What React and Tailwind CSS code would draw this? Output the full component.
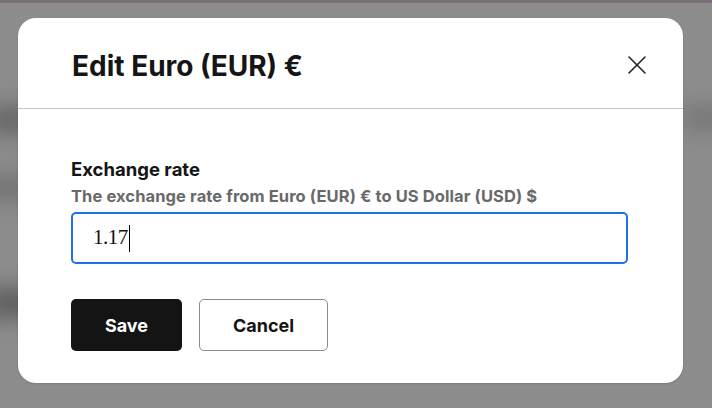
import { X } from 'lucide-react';

const font = { fontFamily: '"Inter", "Lato", sans-serif' };

const EditRateModal = () => {
  return (
    <div className="relative w-[712px] h-[408px] overflow-hidden bg-[#8d8d8d]" style={font}>
      {/* blurred page behind the overlay */}
      <div className="absolute inset-x-0 top-0 h-[3px] bg-[#7a6f78]" />
      <div className="absolute left-[-20px] top-[108px] w-[60px] h-[24px] rounded-full bg-[#5f5f5f] blur-md" />
      <div className="absolute left-[-20px] top-[178px] w-[60px] h-[20px] rounded-full bg-[#6a6a6a] blur-md" />
      <div className="absolute left-[-20px] top-[290px] w-[60px] h-[26px] rounded-full bg-[#555] blur-md" />
      <div className="absolute left-[680px] top-[108px] w-[50px] h-[20px] rounded-full bg-[#6f6f6f] blur-md" />

      <div className="absolute left-[18px] top-[18px] w-[665px] h-[365px] bg-white rounded-[18px] shadow-sm flex flex-col">
        {/* Header */}
        <div className="h-[91px] flex items-center justify-between pl-[54px] pr-[30px] border-b border-[#c8c8c8]">
          <h2 className="text-[28px] font-bold text-[#151515] mt-[6px]">Edit Euro (EUR) €</h2>
          <X className="w-[32px] h-[32px] text-[#222] mt-[3px]" strokeWidth={1.2} />
        </div>

        {/* Body */}
        <div className="flex flex-col pl-[53px] pt-[48px]">
          <label className="text-[18.5px] font-bold text-[#151515] leading-[24px]">Exchange rate</label>
          <p className="text-[16.5px] font-bold text-[#696969] leading-[22px] mt-[4px] tracking-[0.1px]">
            The exchange rate from Euro (EUR) € to US Dollar (USD) $
          </p>
          <div className="mt-[5px] w-[557px] h-[52px] rounded-[5px] border-2 border-[#1a73e8] flex items-center pl-[20px]">
            <span className="text-[21px] text-[#111] tracking-[-0.5px]" style={{ fontFamily: '"Liberation Serif", serif' }}>1.17</span>
            <span className="w-[1.5px] h-[27px] bg-black ml-[1px]" />
          </div>

          <div className="flex gap-[17px] mt-[35px]">
            <button className="w-[111px] h-[52px] rounded-[5px] bg-[#141414] text-white text-[18px] font-bold">Save</button>
            <button className="w-[129px] h-[52px] rounded-[5px] border border-[#8a8a8a] bg-white text-[#151515] text-[18px] font-bold">Cancel</button>
          </div>
        </div>
      </div>
    </div>
  );
};

export default function App() {
  return <EditRateModal />;
}
